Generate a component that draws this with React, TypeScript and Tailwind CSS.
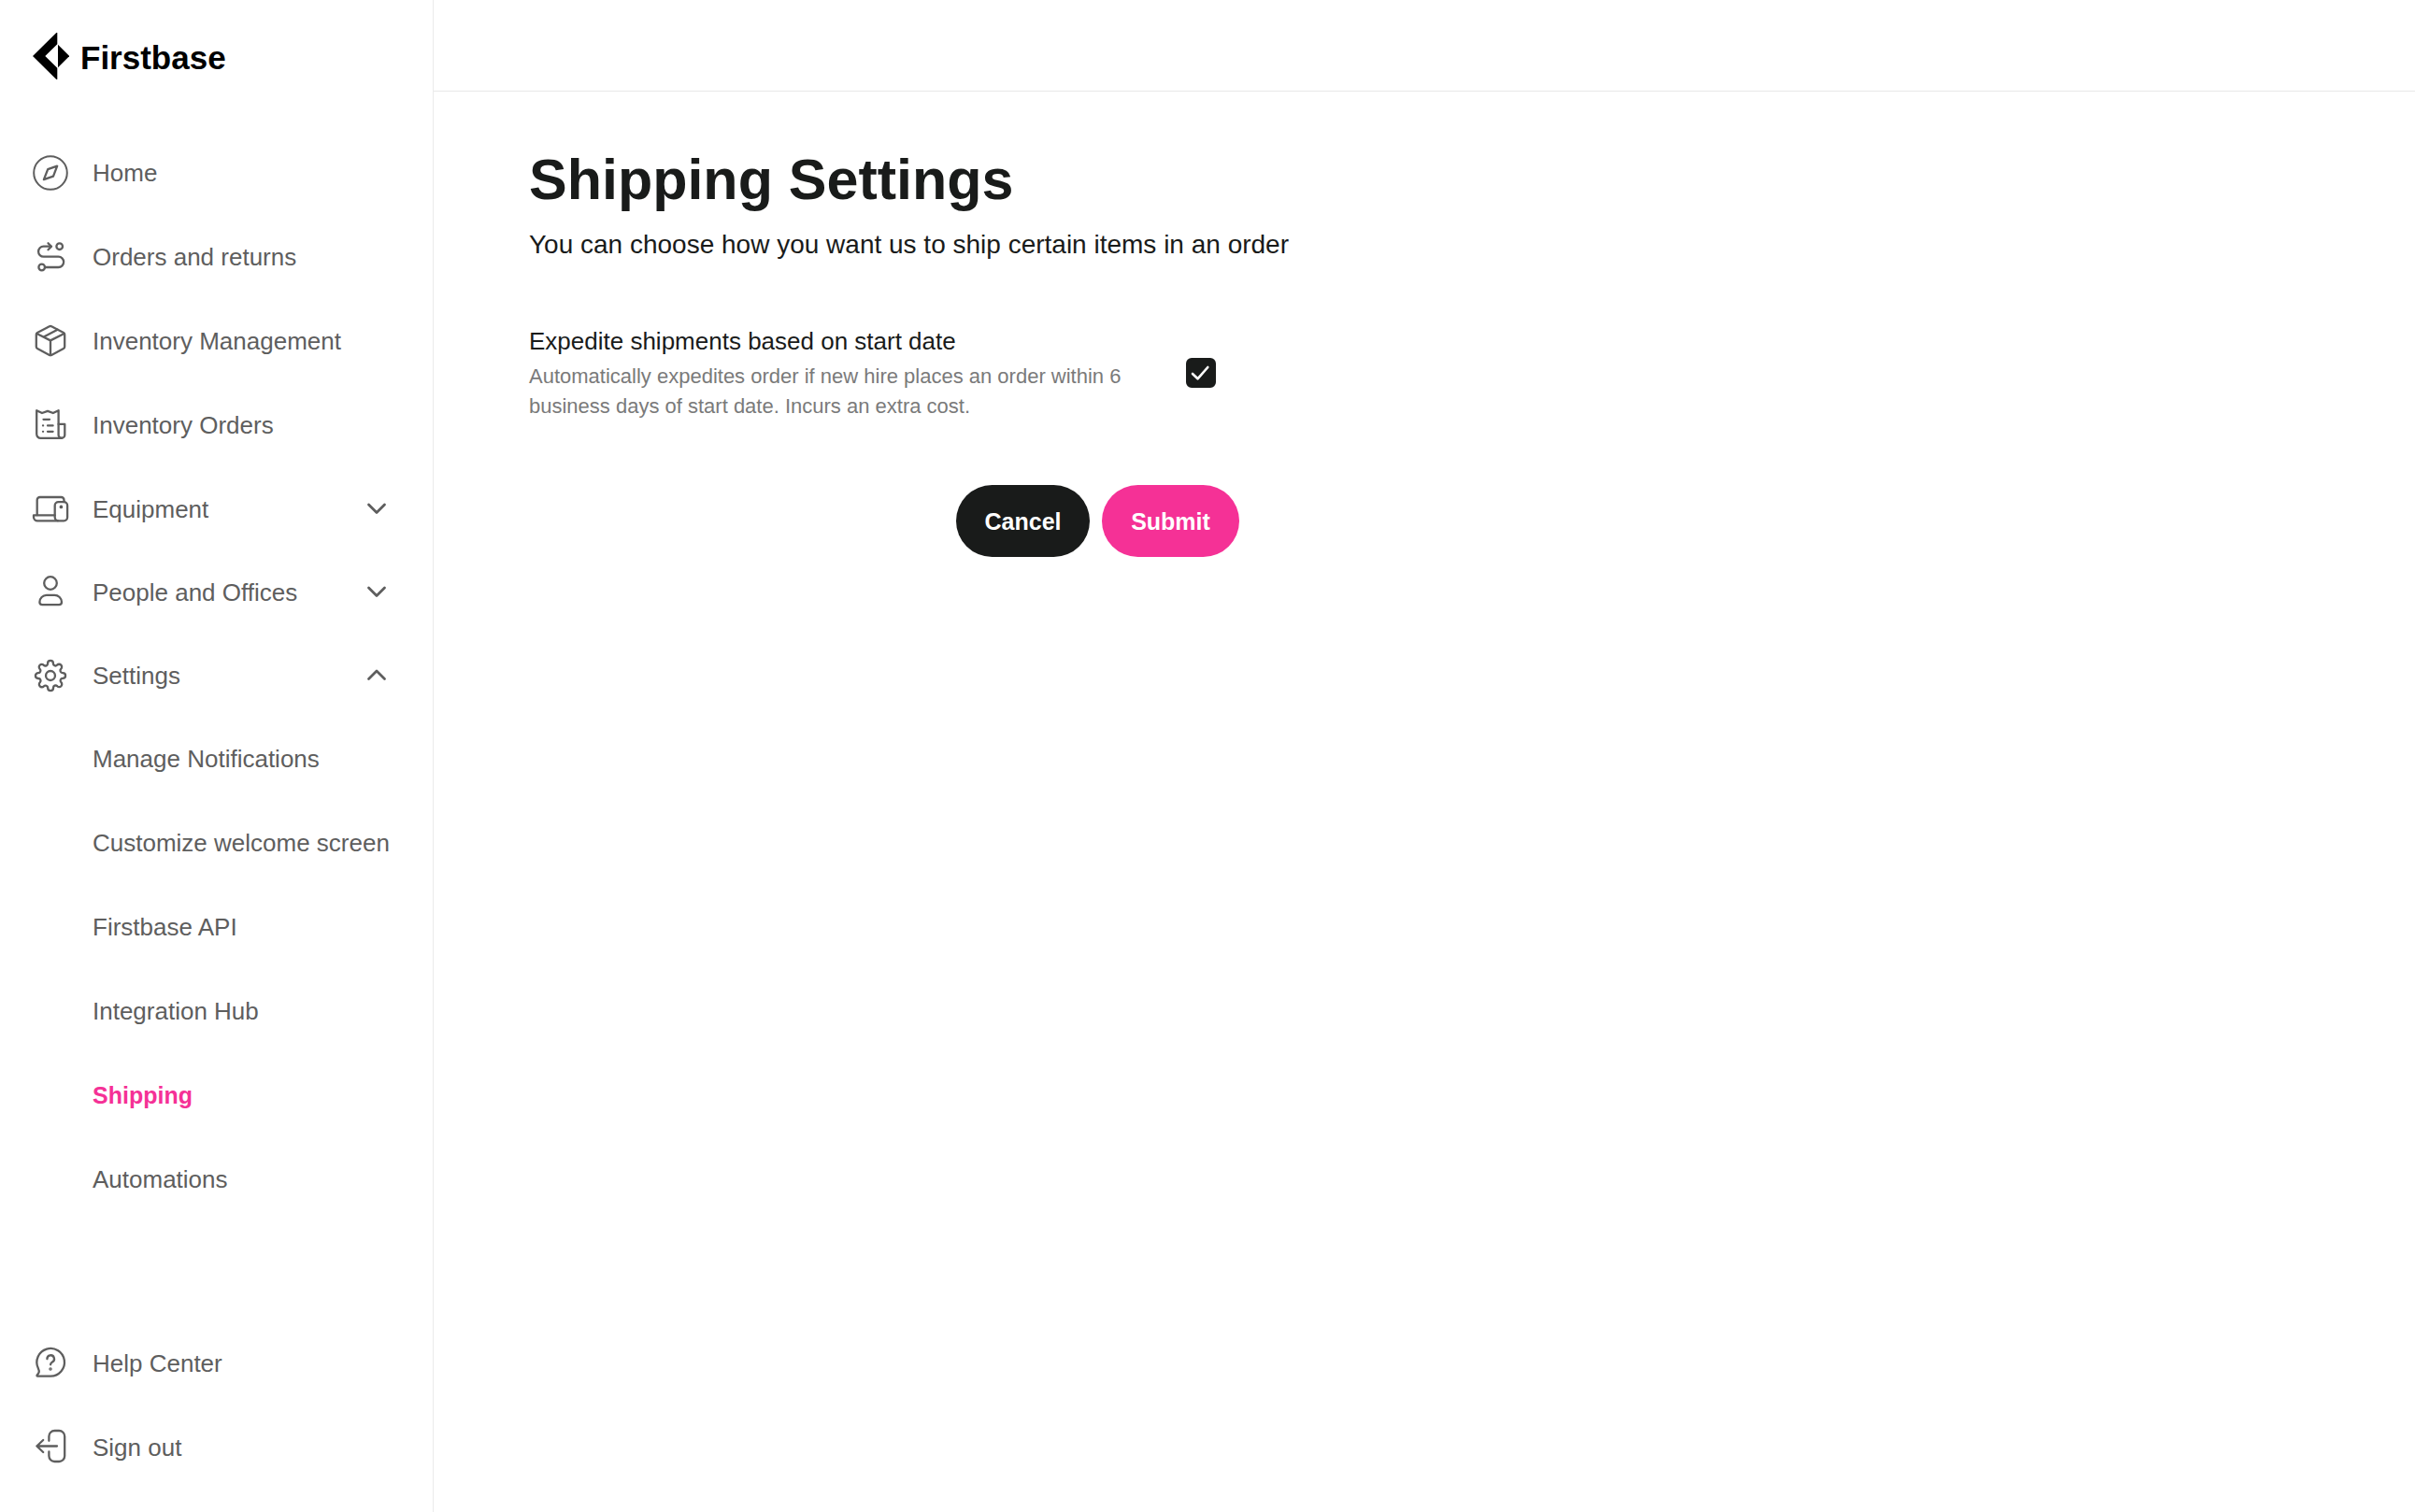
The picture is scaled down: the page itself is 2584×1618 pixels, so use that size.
import { useState, type ReactNode } from "react";

function Icon({ children }: { children: ReactNode }) {
  return (
    <svg
      viewBox="0 0 40 40"
      className="size-10 shrink-0"
      fill="none"
      stroke="currentColor"
      strokeWidth="2.3"
      strokeLinecap="round"
      strokeLinejoin="round"
      aria-hidden="true"
    >
      {children}
    </svg>
  );
}

const compass = (
  <Icon>
    <circle cx="20" cy="20" r="17.8" strokeWidth="2" />
    <path d="M27.2 12.7 L17.2 16.2 L12.9 27.2 L23 23.6 Z" />
  </Icon>
);

const route = (
  <Icon>
    <circle cx="29.7" cy="8.7" r="3.3" />
    <circle cx="10.7" cy="31" r="3.3" />
    <path d="M17.5 5.2 21 8.7 17.5 12.2" />
    <path d="M20.5 8.7H12.6a5.5 5.5 0 0 0 0 11H28.5a5.65 5.65 0 0 1 0 11.3H14.5" />
  </Icon>
);

const box = (
  <Icon>
    <path d="M18.9 4.3a2.4 2.4 0 0 1 2.2 0L34 11.1a2.2 2.2 0 0 1 1.2 2V26a2.2 2.2 0 0 1-1.2 2L21.1 34.9a2.4 2.4 0 0 1-2.2 0L6 28a2.2 2.2 0 0 1-1.2-2V13.1a2.2 2.2 0 0 1 1.2-2Z" />
    <path d="M5.4 12 20 19.4 34.6 12M20 19.4V35M27.6 7.8 12.8 15.6" />
  </Icon>
);

const receipt = (
  <Icon>
    <path d="M28.6 18.9V4.2L22.8 7 17 4.8 11 7 5.2 4.2V29.6a4.2 4.2 0 0 0 4.2 4.2H32" />
    <path d="M28.6 18.9H35.3V30.4a3.35 3.35 0 0 1-6.7 0Z" />
    <path d="M12.5 13.8H19M17 20.4H22.6M17 26.8H22.6M12 20.4h.1M12 26.8h.1" />
  </Icon>
);

const devices = (
  <Icon>
    <path d="M5.7 26.2V10a3 3 0 0 1 3-3H31.5a3 3 0 0 1 3 3v2" />
    <path d="M24.7 26.4H2v1.8a4.1 4.1 0 0 0 4.1 4.1H28" />
    <rect x="24.7" y="12.1" width="13.4" height="20.2" rx="3.8" />
    <circle cx="31.4" cy="17.4" r="0.7" fill="currentColor" />
  </Icon>
);

const person = (
  <Icon>
    <circle cx="20" cy="10" r="6.8" />
    <path d="M15.8 22.8H24.4a7.6 7.6 0 0 1 7.6 7.4a2.9 2.9 0 0 1-2.9 2.9H11.3a2.9 2.9 0 0 1-2.9-2.9a7.6 7.6 0 0 1 7.4-7.4Z" />
  </Icon>
);

const gear = (
  <svg
    viewBox="-1.7 -1.7 27.4 27.4"
    className="size-10 shrink-0"
    fill="none"
    stroke="currentColor"
    strokeWidth="1.6"
    strokeLinecap="round"
    strokeLinejoin="round"
    aria-hidden="true"
  >
    <circle cx="12" cy="12" r="3.4" />
    <path d="M19.4 15a1.65 1.65 0 0 0 .33 1.82l.06.06a2 2 0 0 1 0 2.83 2 2 0 0 1-2.83 0l-.06-.06a1.65 1.65 0 0 0-1.82-.33 1.65 1.65 0 0 0-1 1.51V21a2 2 0 0 1-2 2 2 2 0 0 1-2-2v-.09A1.65 1.65 0 0 0 9 19.4a1.65 1.65 0 0 0-1.82.33l-.06.06a2 2 0 0 1-2.83 0 2 2 0 0 1 0-2.83l.06-.06a1.65 1.65 0 0 0 .33-1.82 1.65 1.65 0 0 0-1.51-1H3a2 2 0 0 1-2-2 2 2 0 0 1 2-2h.09A1.65 1.65 0 0 0 4.6 9a1.65 1.65 0 0 0-.33-1.82l-.06-.06a2 2 0 0 1 0-2.83 2 2 0 0 1 2.83 0l.06.06a1.65 1.65 0 0 0 1.82.33H9a1.65 1.65 0 0 0 1-1.51V3a2 2 0 0 1 2-2 2 2 0 0 1 2 2v.09a1.65 1.65 0 0 0 1 1.51 1.65 1.65 0 0 0 1.82-.33l.06-.06a2 2 0 0 1 2.83 0 2 2 0 0 1 0 2.83l-.06.06a1.65 1.65 0 0 0-.33 1.82V9a1.65 1.65 0 0 0 1.51 1H21a2 2 0 0 1 2 2 2 2 0 0 1-2 2h-.09a1.65 1.65 0 0 0-1.51 1z" />
  </svg>
);

const help = (
  <Icon>
    <path d="M20.2 33.6a14.8 14.8 0 1 0-13.4-8.5c.7 1.6 1.3 2.8.9 4.2-.3 1.3-1.2 2.2-2 3.2-.4.6-.2 1.1.4 1.1Z" />
    <path d="M16.4 15.2a3.8 3.8 0 1 1 5.6 3.2c-1.2.7-1.9 1.4-1.9 2.9" />
    <circle cx="20" cy="26" r="0.6" fill="currentColor" />
  </Icon>
);

const signOut = (
  <Icon>
    <path d="M18.4 12.8V8a6 6 0 0 1 6-6h4.8a6 6 0 0 1 6 6V29a6 6 0 0 1-6 6H24.4a6 6 0 0 1-6-6V24.4" />
    <path d="M27 18.5H5.4M12.2 12 5.4 18.5 12.2 25" />
  </Icon>
);

function Chevron({ open }: { open?: boolean }) {
  return (
    <svg
      viewBox="0 0 24 24"
      className="ml-auto size-6 shrink-0"
      fill="none"
      stroke="currentColor"
      strokeWidth="2.8"
      strokeLinecap="round"
      strokeLinejoin="round"
      aria-hidden="true"
    >
      <path d={open ? "M3.5 15.5 12 7 20.5 15.5" : "M3.5 7 12 15.5 20.5 7"} />
    </svg>
  );
}

const rowClass = "flex w-full items-center gap-[25px] pr-12 pl-[34px] text-left whitespace-nowrap";

const links = [
  { label: "Home", icon: compass },
  { label: "Orders and returns", icon: route },
  { label: "Inventory Management", icon: box },
  { label: "Inventory Orders", icon: receipt },
];

const groups = [
  { label: "Equipment", icon: devices, open: false },
  { label: "People and Offices", icon: person, open: false },
  { label: "Settings", icon: gear, open: true },
];

const settingsLinks = [
  "Manage Notifications",
  "Customize welcome screen",
  "Firstbase API",
  "Integration Hub",
  "Shipping",
  "Automations",
];

function Sidebar() {
  return (
    <aside className="flex w-[464px] shrink-0 flex-col border-r border-[#ebebeb] pb-6 text-[26px] leading-8 text-[#5e5e5e]">
      <a href="#" className="flex h-[120px] items-center gap-3 pl-[34px] text-[35px] leading-10 font-bold text-black">
        <svg viewBox="0 0 40 52" className="h-[52px] w-10" fill="currentColor" aria-hidden="true">
          <path d="M27.3 1V13.3L14.3 26 27.3 38.8V51H26.3L1 26 26.3 1Z" />
          <path d="M28 13.7 40.3 26 28 38.3Z" />
        </svg>
        <span className="pt-1">Firstbase</span>
      </a>
      <nav className="mt-5">
        {links.map((l) => (
          <a key={l.label} href="#" className={`${rowClass} h-[90px]`}>
            {l.icon}
            {l.label}
          </a>
        ))}
        {groups.map((g) => (
          <button key={g.label} type="button" aria-expanded={g.open} className={`${rowClass} h-[89px]`}>
            {g.icon}
            {g.label}
            <Chevron open={g.open} />
          </button>
        ))}
        {settingsLinks.map((label) => (
          <a
            key={label}
            href="#"
            aria-current={label === "Shipping" ? "page" : undefined}
            className={`flex h-[90px] items-center pl-[99px] whitespace-nowrap ${
              label === "Shipping" ? "text-[25px] font-bold text-[#f53196]" : ""
            }`}
          >
            {label}
          </a>
        ))}
      </nav>
      <div className="mt-auto">
        <a href="#" className={`${rowClass} h-[90px]`}>
          {help}
          Help Center
        </a>
        <button type="button" className={`${rowClass} h-[90px]`}>
          {signOut}
          Sign out
        </button>
      </div>
    </aside>
  );
}

export default function App() {
  const [expedite, setExpedite] = useState(true);
  return (
    <div className="flex min-h-screen bg-white font-['Liberation_Sans',Arial,sans-serif] text-[#191b1a]">
      <Sidebar />
      <div className="flex min-w-0 flex-1 flex-col">
        <header className="h-[98px] border-b border-[#e8e8e8]" />
        <main className="px-[102px] pt-14">
          <h1 className="text-[61px] leading-[76px] font-bold">Shipping Settings</h1>
          <p className="mt-3 text-[28px] leading-10">You can choose how you want us to ship certain items in an order</p>
          <form className="mt-[65px] max-w-[760px]" onSubmit={(e) => e.preventDefault()}>
            <div className="flex items-center justify-between pr-[25px]">
              <div className="w-[660px]">
                <label htmlFor="expedite" className="block text-[26px] leading-9">
                  Expedite shipments based on start date
                </label>
                <p id="expedite-help" className="mt-1 text-[22px] leading-8 text-[#7a7a7a]">
                  Automatically expedites order if new hire places an order within 6 business days of start date. Incurs
                  an extra cost.
                </p>
              </div>
              <span className="grid size-8">
                <input
                  id="expedite"
                  type="checkbox"
                  aria-describedby="expedite-help"
                  checked={expedite}
                  onChange={(e) => setExpedite(e.target.checked)}
                  className="peer col-start-1 row-start-1 size-8 appearance-none rounded-md border-2 border-[#191b1a] checked:bg-[#191b1a]"
                />
                <svg
                  viewBox="0 0 32 32"
                  className="pointer-events-none col-start-1 row-start-1 size-8 opacity-0 peer-checked:opacity-100"
                  fill="none"
                  stroke="#ffffff"
                  strokeWidth="2.6"
                  strokeLinecap="round"
                  strokeLinejoin="round"
                  aria-hidden="true"
                >
                  <path d="M7 17 12.5 22.3 23.3 10" />
                </svg>
              </span>
            </div>
            <div className="mt-[68px] flex justify-end gap-[13px] text-[25px] leading-8 font-bold text-white">
              <button type="button" className="h-[77px] w-[143px] rounded-full bg-[#191b1a]">
                Cancel
              </button>
              <button type="submit" className="h-[77px] w-[147px] rounded-full bg-[#f53196]">
                Submit
              </button>
            </div>
          </form>
        </main>
      </div>
    </div>
  );
}
